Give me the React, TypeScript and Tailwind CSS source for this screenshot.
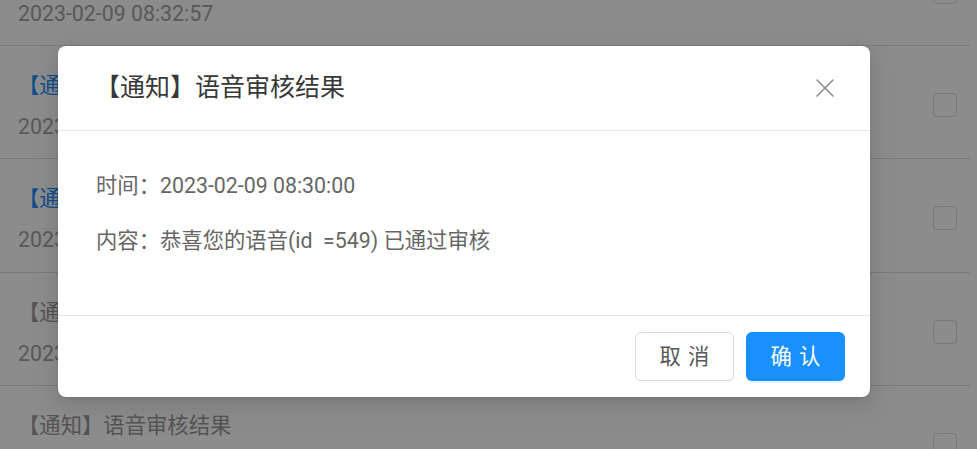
import React from "react";

type Notice = {
  title: string;
  time: string;
  read: boolean;
};

const notices: Notice[] = [
  { title: "【通知】语音审核结果", time: "2023-02-09 08:32:57", read: true },
  { title: "【通知】语音审核结果", time: "2023-02-09 08:31:42", read: false },
  { title: "【通知】语音审核结果", time: "2023-02-09 08:30:00", read: false },
  { title: "【通知】语音审核结果", time: "2023-02-09 08:29:13", read: true },
  { title: "【通知】语音审核结果", time: "2023-02-09 08:27:36", read: true },
];

const FONT = "font-['Roboto','Noto_Sans_CJK_SC',sans-serif]";

function NoticeRow({ notice }: { notice: Notice }) {
  return (
    <div className="flex h-[113.33px] items-start justify-between border-b border-[#dedede] pl-[18px] pr-[13px] pt-[25px]">
      <div className="flex flex-col gap-[11px]">
        <p
          className={
            notice.read
              ? "text-[21.33px] leading-[30px] text-[#999]"
              : "text-[21.33px] leading-[30px] text-[#1890ff]"
          }
        >
          {notice.title}
        </p>
        <p className="text-[21.33px] leading-[30px] text-[#a3a3a3]">{notice.time}</p>
      </div>
      <span className="mt-[22px] h-[24px] w-[24px] rounded-[4px] border border-[#d9d9d9] bg-white" />
    </div>
  );
}

function CloseIcon() {
  return (
    <svg width="18" height="18" viewBox="0 0 18 18" fill="none" aria-hidden>
      <path d="M1 1L17 17M17 1L1 17" stroke="#8c8c8c" strokeWidth="1.6" strokeLinecap="round" />
    </svg>
  );
}

function NoticeModal() {
  return (
    <div className="absolute inset-0 bg-black/45 pl-[58px] pt-[46px]">
      <div className="w-[812px] overflow-hidden rounded-[8px] bg-white shadow-[0_6px_16px_0_rgba(0,0,0,0.08),0_3px_6px_-4px_rgba(0,0,0,0.12),0_9px_28px_8px_rgba(0,0,0,0.05)]">
        <div className="flex h-[85px] items-center justify-between border-b border-[#e8e8e8] pl-[37px] pr-[33px]">
          <h2 className="text-[25px] font-normal leading-[32px] text-[#383838]">
            【通知】语音审核结果
          </h2>
          <button type="button" className="flex h-[24px] w-[24px] items-center justify-center">
            <CloseIcon />
          </button>
        </div>
        <div className="flex flex-col gap-[25px] pb-[59px] pl-[38px] pt-[40px] text-[21.33px] leading-[30px] text-[#666]">
          <p>时间：2023-02-09 08:30:00</p>
          <p>内容：恭喜您的语音(id{"\u00a0"} =549) 已通过审核</p>
        </div>
        <div className="flex h-[82px] items-start justify-end gap-[12px] border-t border-[#e8e8e8] pr-[25px] pt-[16px]">
          <button
            type="button"
            className="flex h-[49px] w-[99px] items-center justify-center rounded-[6px] border border-[#d9d9d9] bg-white pl-[7px] text-[21.33px] tracking-[0.34em] text-[#595959] shadow-[0_2px_0_rgba(0,0,0,0.02)]"
          >
            取消
          </button>
          <button
            type="button"
            className="flex h-[49px] w-[99px] items-center justify-center rounded-[6px] bg-[#1890ff] pl-[7px] text-[21.33px] tracking-[0.34em] text-white shadow-[0_2px_0_rgba(5,145,255,0.1)]"
          >
            确认
          </button>
        </div>
      </div>
    </div>
  );
}

export default function App() {
  return (
    <div className={`relative h-[449px] w-[977px] overflow-hidden bg-white ${FONT}`}>
      <div className="-mt-[67.33px] w-[970px]">
        {notices.map((n, i) => (
          <NoticeRow key={i} notice={n} />
        ))}
      </div>
      <NoticeModal />
    </div>
  );
}
